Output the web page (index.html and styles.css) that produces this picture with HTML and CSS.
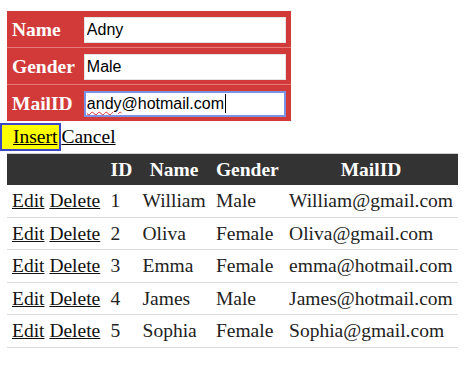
FILE: index.html
```html
<!DOCTYPE html>
<html lang="en">
<head>
<meta charset="utf-8">
<title>Employees</title>
<link rel="stylesheet" href="styles.css">
</head>
<body>
<div class="page">
  <table class="entry">
    <tr>
      <td class="label">Name</td>
      <td class="field"><input class="box" type="text" value="Adny"></td>
    </tr>
    <tr>
      <td class="label">Gender</td>
      <td class="field"><input class="box" type="text" value="Male"></td>
    </tr>
    <tr>
      <td class="label">MailID</td>
      <td class="field"><div class="box focused"><span class="misspelt">andy</span>@hotmail.com<span class="caret"></span></div></td>
    </tr>
  </table>
  <div class="actions">
    <a class="btn-insert" href="#">Insert</a><a class="btn-cancel" href="#">Cancel</a>
  </div>
  <table class="grid">
    <thead>
      <tr><th></th><th>ID</th><th>Name</th><th>Gender</th><th class="wide">MailID</th></tr>
    </thead>
    <tbody>
      <tr><td><a href="#">Edit</a> <a href="#">Delete</a></td><td>1</td><td>William</td><td>Male</td><td>William@gmail.com</td></tr>
      <tr><td><a href="#">Edit</a> <a href="#">Delete</a></td><td>2</td><td>Oliva</td><td>Female</td><td>Oliva@gmail.com</td></tr>
      <tr><td><a href="#">Edit</a> <a href="#">Delete</a></td><td>3</td><td>Emma</td><td>Female</td><td>emma@hotmail.com</td></tr>
      <tr><td><a href="#">Edit</a> <a href="#">Delete</a></td><td>4</td><td>James</td><td>Male</td><td>James@hotmail.com</td></tr>
      <tr><td><a href="#">Edit</a> <a href="#">Delete</a></td><td>5</td><td>Sophia</td><td>Female</td><td>Sophia@gmail.com</td></tr>
    </tbody>
  </table>
</div>
</body>
</html>
```

FILE: styles.css
```css
html, body {
  margin: 0;
  padding: 0;
  background: #ffffff;
}

.page {
  padding-top: 11px;
  font-family: "Liberation Serif", "Times New Roman", serif;
  font-size: 19.5px;
  color: #222;
}

.entry {
  margin-left: 7px;
  border-collapse: collapse;
  background: #d23a3a;
}

.entry tr {
  border-bottom: 1px solid #e57a7a;
}

.entry tr:last-child {
  border-bottom: none;
}

.entry td {
  padding: 6px 0 4px;
  vertical-align: middle;
}

.entry .label {
  padding-left: 5px;
  padding-right: 9px;
  color: #ffffff;
  font-weight: bold;
  line-height: 22px;
}

.entry .field {
  padding-right: 5px;
}

.box {
  display: block;
  box-sizing: border-box;
  width: 202px;
  height: 26px;
  margin: 0;
  padding: 0 2px;
  border: 1px solid #e4e4e4;
  background: #fff;
  font-family: "Liberation Sans", Arial, sans-serif;
  font-size: 16px;
  line-height: 24px;
  color: #000;
  outline: none;
}

.box.focused {
  border: 2px solid #7b93e6;
  padding: 0 1px;
  line-height: 22px;
  white-space: nowrap;
}

.misspelt {
  text-decoration: underline wavy #e03030;
  text-decoration-thickness: 1px;
  text-underline-offset: 2px;
}

.caret {
  display: inline-block;
  width: 1px;
  height: 19px;
  background: #000;
  vertical-align: -4px;
  margin-left: 1px;
}

.actions {
  margin-top: 2px;
  display: flex;
  align-items: center;
  line-height: 22px;
}

.actions a {
  color: #000;
  text-decoration: underline;
}

.btn-insert {
  display: inline-block;
  background: #ffff00;
  border: 2px solid #3a48c8;
  padding: 1px 2px 1px 11px;
}

.btn-cancel {
  display: inline-block;
}

.grid {
  margin-top: 2px;
  margin-left: 7px;
  border-collapse: collapse;
  border-top: 1px solid #cfcfcf;
  line-height: 22px;
}

.grid th {
  background: #333333;
  color: #ffffff;
  font-weight: bold;
  text-align: center;
  padding: 5px 5.3px 4px 5px;
  white-space: nowrap;
}

.grid td {
  padding: 5px 5.3px 4.6px 5px;
  border-bottom: 1px solid #dcdcdc;
  white-space: nowrap;
  color: #222;
}

.grid td a {
  color: #111;
  text-decoration: underline;
}
```
